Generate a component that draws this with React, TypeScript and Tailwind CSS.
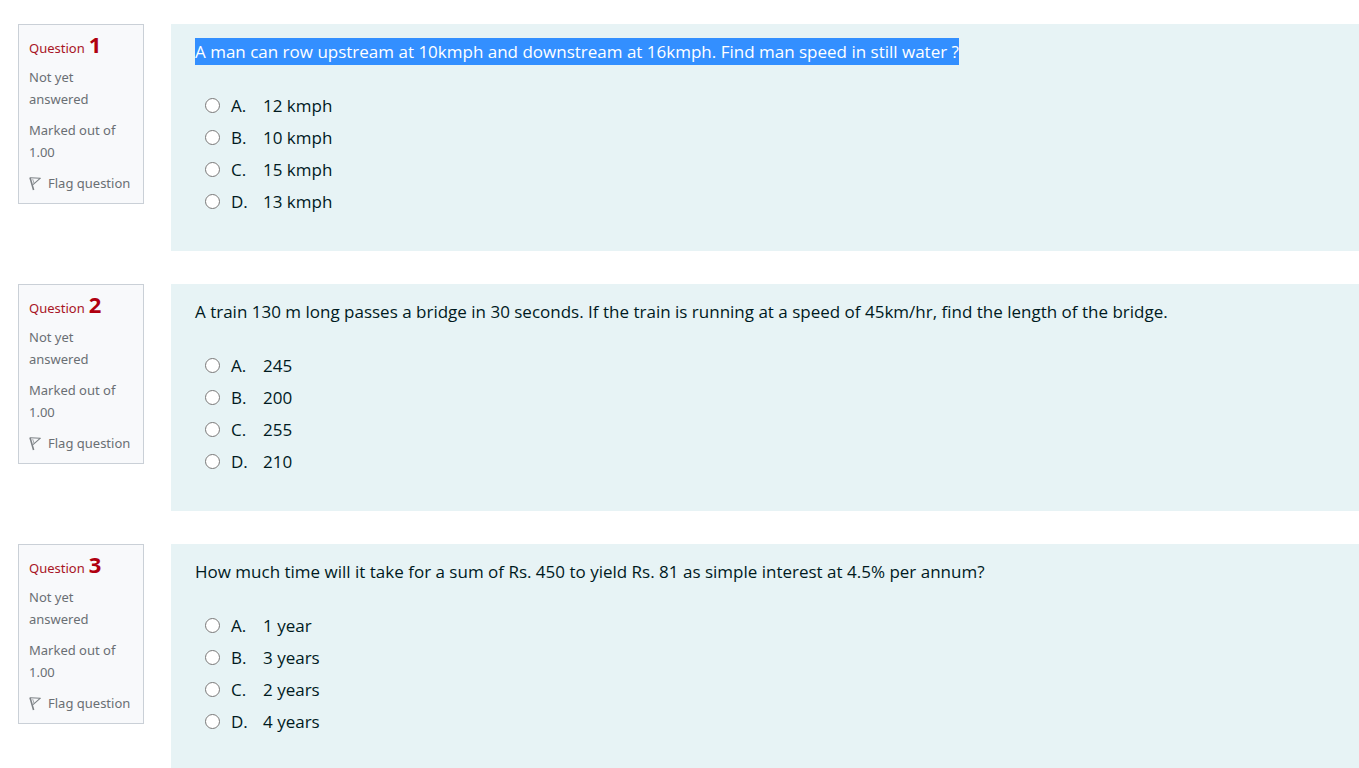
interface Question {
  number: number;
  text: string;
  highlighted?: boolean;
  answers: string[];
}

const QUESTIONS: Question[] = [
  {
    number: 1,
    text: 'A man can row upstream at 10kmph and downstream at 16kmph. Find man speed in still water ?',
    highlighted: true,
    answers: ['12 kmph', '10 kmph', '15 kmph', '13 kmph'],
  },
  {
    number: 2,
    text: 'A train 130 m long passes a bridge in 30 seconds. If the train is running at a speed of 45km/hr, find the length of the bridge.',
    answers: ['245', '200', '255', '210'],
  },
  {
    number: 3,
    text: 'How much time will it take for a sum of Rs. 450 to yield Rs. 81 as simple interest at 4.5% per annum?',
    answers: ['1 year', '3 years', '2 years', '4 years'],
  },
];

const LETTERS = ['A', 'B', 'C', 'D'];

function FlagIcon() {
  return (
    <svg
      width="13"
      height="15"
      viewBox="0 0 13 15"
      fill="none"
      stroke="#7d8286"
      strokeLinejoin="round"
      className="shrink-0"
      aria-hidden="true"
    >
      <path d="M1 1.5 L4.6 14" strokeWidth="1.6" />
      <path d="M1.4 1.8 L11.4 2.2 L4 8.6" strokeWidth="1.1" />
      <path d="M3.7 3.2 L5 7.2" strokeWidth="0.7" />
    </svg>
  );
}

function QuestionInfo({ number }: { number: number }) {
  return (
    <div className="w-[126px] shrink-0 flex flex-col gap-[9px] pt-2 pb-[9px] pl-[10px] border border-[#cad0d7] bg-[#f8f9fb] font-['Noto_Sans',sans-serif] text-[13px] leading-[22px] text-[#6a6f74]">
      <h3 className="flex items-baseline gap-1 h-6 text-[#a81425]">
        Question <span className="text-[22px] leading-[22px] font-bold text-[#b0000f]">{number}</span>
      </h3>
      <div>
        Not yet
        <br />
        answered
      </div>
      <div>
        Marked out of
        <br />
        1.00
      </div>
      <a href={`#flag-${number}`} className="flex items-center gap-[6px] whitespace-nowrap">
        <FlagIcon />
        Flag question
      </a>
    </div>
  );
}

function QuestionContent({ question }: { question: Question }) {
  const name = `question-${question.number}`;

  return (
    <fieldset className="flex-1 min-w-0 bg-[#e7f3f5] px-6 pt-[14px] pb-[34px] text-[17px] leading-[27px] text-[#001a1e]">
      <p>
        {question.highlighted ? (
          <mark className="inline-block bg-[#338fff] text-white">{question.text}</mark>
        ) : (
          question.text
        )}
      </p>
      <div className="mt-6 pl-[10px]">
        {question.answers.map((answer, i) => (
          <div key={answer} className="flex items-center h-8">
            <input
              type="radio"
              id={`${name}-${i}`}
              name={name}
              className="size-[15px] mr-[11px]"
            />
            <label htmlFor={`${name}-${i}`} className="flex">
              <span className="w-8">{LETTERS[i]}.</span>
              {answer}
            </label>
          </div>
        ))}
      </div>
    </fieldset>
  );
}

export default function App() {
  return (
    <main className="min-h-screen bg-white pt-6 pl-[18px] flex flex-col gap-[33px] font-['Open_Sans','Noto_Sans',sans-serif]">
      {QUESTIONS.map((question) => (
        <section key={question.number} className="flex items-start gap-[27px]">
          <QuestionInfo number={question.number} />
          <QuestionContent question={question} />
        </section>
      ))}
    </main>
  );
}
